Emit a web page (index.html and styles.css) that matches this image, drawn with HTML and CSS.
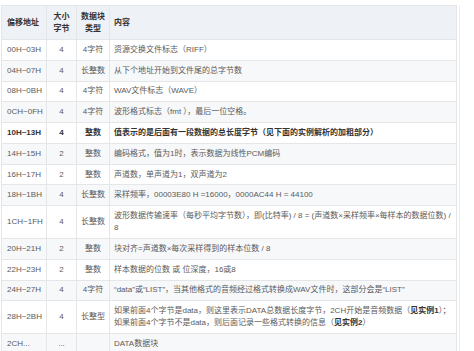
FILE: index.html
```html
<!DOCTYPE html>
<html lang="zh-CN">
<head>
<meta charset="utf-8">
<link rel="stylesheet" href="styles.css">
</head>
<body>
<div class="wrap">
<table class="tbl">
<colgroup><col class="c1"><col class="c2"><col class="c3"><col class="c4"></colgroup>
<thead>
<tr><th class="l">偏移地址</th><th>大小<br>字节</th><th>数据块<br>类型</th><th class="l">内容</th></tr>
</thead>
<tbody>
<tr><td class="l">00H~03H</td><td>4</td><td>4字符</td><td class="l">资源交换文件标志（RIFF）</td></tr>
<tr><td class="l">04H~07H</td><td>4</td><td>长整数</td><td class="l">从下个地址开始到文件尾的总字节数</td></tr>
<tr><td class="l">08H~0BH</td><td>4</td><td>4字符</td><td class="l">WAV文件标志（WAVE）</td></tr>
<tr><td class="l">0CH~0FH</td><td>4</td><td>4字符</td><td class="l">波形格式标志（fmt ），最后一位空格。</td></tr>
<tr class="bold"><td class="l">10H~13H</td><td>4</td><td>整数</td><td class="l">值表示的是后面有一段数据的总长度字节（见下面的实例解析的加粗部分）</td></tr>
<tr><td class="l">14H~15H</td><td>2</td><td>整数</td><td class="l">编码格式，值为1时，表示数据为线性PCM编码</td></tr>
<tr><td class="l">16H~17H</td><td>2</td><td>整数</td><td class="l">声道数，单声道为1，双声道为2</td></tr>
<tr><td class="l">18H~1BH</td><td>4</td><td>长整数</td><td class="l">采样频率，00003E80 H =16000，0000AC44 H = 44100</td></tr>
<tr><td class="l">1CH~1FH</td><td>4</td><td>长整数</td><td class="l">波形数据传输速率（每秒平均字节数），即(比特率) / 8 = (声道数×采样频率×每样本的数据位数) /<br>8</td></tr>
<tr><td class="l">20H~21H</td><td>2</td><td>整数</td><td class="l">块对齐=声道数×每次采样得到的样本位数 / 8</td></tr>
<tr><td class="l">22H~23H</td><td>2</td><td>整数</td><td class="l">样本数据的位数 或 位深度，16或8</td></tr>
<tr><td class="l">24H~27H</td><td>4</td><td>4字符</td><td class="l">“data”或“LIST”，当其他格式的音频经过格式转换成WAV文件时，这部分会是“LIST”</td></tr>
<tr><td class="l">28H~2BH</td><td>4</td><td>长整型</td><td class="l">如果前面4个字节是data，则这里表示DATA总数据长度字节，2CH开始是音频数据（<b>见实例1</b>）；<br>如果前面4个字节不是data，则后面记录一些格式转换的信息（<b>见实例2</b>）</td></tr>
<tr><td class="l">2CH...</td><td>...</td><td></td><td class="l">DATA数据块</td></tr>
</tbody>
</table>
</div>
</body>
</html>
```
FILE: styles.css
```css
html, body {
  margin: 0;
  padding: 0;
  background: #fff;
}
body {
  font-family: "Liberation Sans", "Noto Sans CJK SC", sans-serif;
  font-size: 8px;
  color: #5a5a5a;
}
.wrap {
  margin: 5px 0 0 1px;
  width: 458px;
  border-right: 1px solid #ededed;
}
.tbl {
  border-collapse: collapse;
  width: 455px;
  table-layout: fixed;
}
.c1 { width: 45px; }
.c2 { width: 30px; }
.c3 { width: 33px; }
.c4 { width: 347px; }
.tbl th, .tbl td {
  border: 1px solid #e4e6e8;
  text-align: center;
  line-height: 12px;
  padding: 3.9px 4px;
  vertical-align: middle;
  white-space: nowrap;
}
.tbl th {
  background: #eef2f6;
  color: #333;
  font-weight: bold;
  padding: 4.5px 4px;
}
.tbl .l {
  text-align: left;
}
.tbl td.l:first-child, .tbl th.l:first-child {
  padding-left: 5px;
}
.tbl tbody tr:nth-child(even) td {
  background: #f7f8fa;
}
.tbl tr.bold td {
  font-weight: bold;
  color: #333;
}
.tbl b {
  color: #333;
}
```
